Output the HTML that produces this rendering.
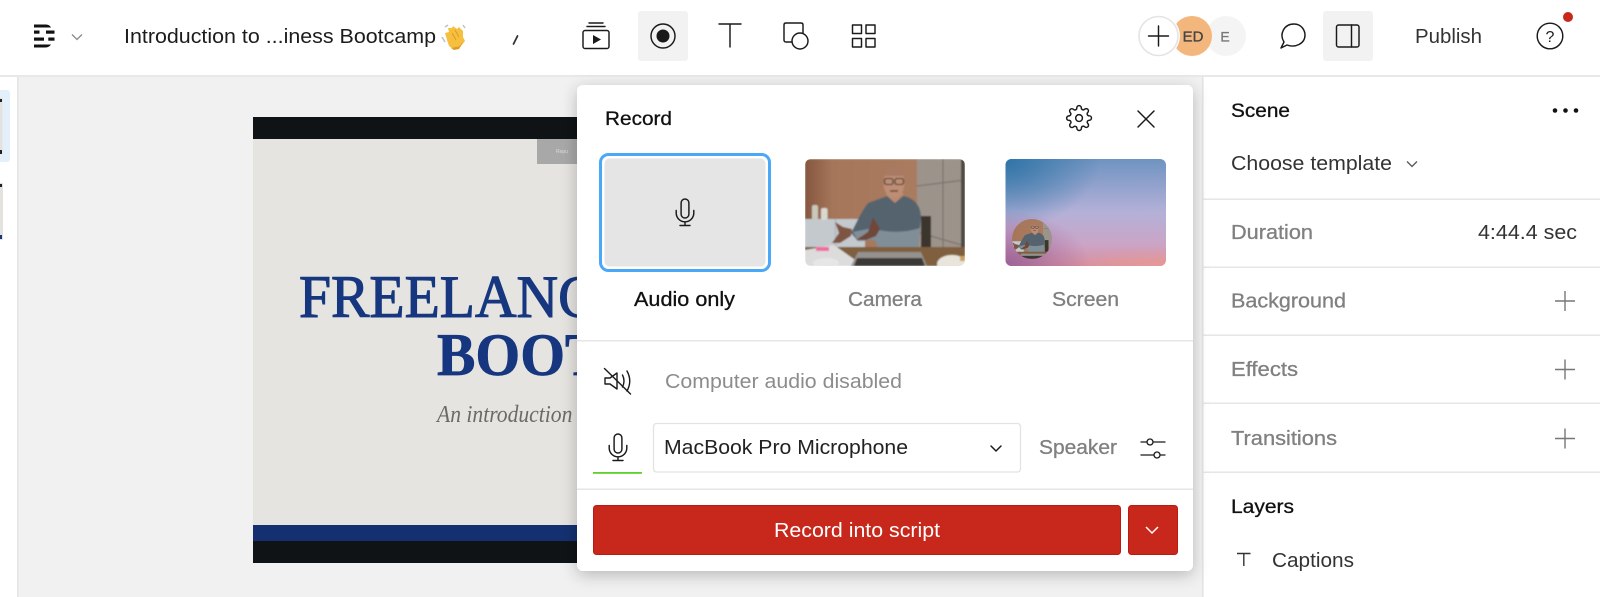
<!DOCTYPE html>
<html><head><meta charset="utf-8"><style>
html,body{margin:0;padding:0;background:#fff;width:1600px;height:597px;overflow:hidden}
svg{display:block}
text{font-family:"Liberation Sans",sans-serif;fill:#1c1c1c}
.m{stroke:currentColor;stroke-width:.3px}
.i{fill:none;stroke:#1a1a1a;stroke-width:1.450;stroke-linecap:round;stroke-linejoin:round}
.g{fill:#808080;color:#808080}
.s{font-family:"Liberation Serif",serif;fill:#16377f}
</style></head><body>
<svg width="1600" height="597" viewBox="0 0 1600 597" xmlns="http://www.w3.org/2000/svg">
<defs>
<filter id="sh" x="-10%" y="-10%" width="120%" height="125%"><feDropShadow dx="0" dy="4" stdDeviation="8" flood-color="#000" flood-opacity=".24"/></filter>
<filter id="b1"><feGaussianBlur stdDeviation=".8"/></filter>
<clipPath id="cam"><rect x="805" y="159" width="160" height="107" rx="6"/></clipPath>
<clipPath id="scr"><rect x="1005.500" y="159" width="160.500" height="107" rx="6"/></clipPath>
<clipPath id="cir"><circle cx="1032" cy="239" r="20"/></clipPath>
<linearGradient id="sv" x1="0" y1="0" x2="0" y2="1"><stop offset="0" stop-color="#6f93c1"/><stop offset=".5" stop-color="#b4b1d8"/><stop offset=".8" stop-color="#cba4c6"/><stop offset="1" stop-color="#d8909e"/></linearGradient>
<radialGradient id="tl"><stop offset="0" stop-color="#2f74a6"/><stop offset="1" stop-color="#2f74a6" stop-opacity="0"/></radialGradient>
<radialGradient id="bl"><stop offset="0" stop-color="#9c6298"/><stop offset="1" stop-color="#9c6298" stop-opacity="0"/></radialGradient>
<radialGradient id="br"><stop offset="0" stop-color="#ee9c90"/><stop offset="1" stop-color="#ee9c90" stop-opacity="0"/></radialGradient>
<linearGradient id="wall" x1="0" y1="0" x2="1" y2="0"><stop offset="0" stop-color="#85563f"/><stop offset=".25" stop-color="#a6765a"/><stop offset="1" stop-color="#a97b5e"/></linearGradient>
<g id="photo" filter="url(#b1)">
<rect x="805" y="159" width="112" height="107" fill="url(#wall)"/>
<rect x="917" y="159" width="48" height="107" fill="#9c938b"/>
<path d="M917 186 965 180M917 232 965 246M943 159V250" stroke="#756d66" stroke-width="1" fill="none"/>
<rect x="961" y="159" width="4" height="100" fill="#4e4842"/>
<rect x="805" y="219" width="60" height="30" fill="#c3c9cd"/>
<rect x="835" y="219" width="1" height="30" fill="#a9afb4"/>
<rect x="812" y="205" width="6" height="15" rx="2" fill="#c9c8bc"/>
<rect x="821" y="208" width="6.500" height="12" rx="2" fill="#d9d8cf"/>
<rect x="921" y="216" width="10" height="32" fill="#3a342f"/>
<path d="M887 196 868 203C861 212 857 222 851 233L858 241 875 240 878 248H918L921 218C921 207 916 199 904 196Z" fill="#55636e"/>
<path d="M853 232 858 241 875 240 878 248H918L920 228C905 233 885 233 873 228Z" fill="#808e98"/>
<path d="M886 195 895 203 904 195 900 188 889 188Z" fill="#b98a70"/>
<ellipse cx="894" cy="183" rx="10.500" ry="15" fill="#bd8e74"/>
<path d="M884 176C885 165 903 165 904 176Z" fill="#a97a63"/>
<rect x="884.500" y="178.500" width="8.500" height="6" rx="2" fill="none" stroke="#222" stroke-width="1.100"/>
<rect x="895" y="178.500" width="8.500" height="6" rx="2" fill="none" stroke="#222" stroke-width="1.100"/>
<path d="M890 191h8" stroke="#6e3f35" stroke-width="1.500"/>
<path d="M832 243 839 233 835 222 843 227 852 229 851 236 840 243Z" fill="#7e5542"/>
<path d="M856 240 868 232 873 217 880 229 876 236 866 240Z" fill="#6f4637"/>
<rect x="805" y="247" width="160" height="19" fill="#7f5e3e"/>
<path d="M805 250 834 245 858 262 850 266H805Z" fill="#dcdcdc"/>
<rect x="816" y="247" width="13" height="4" fill="#f06aa0"/>
<ellipse cx="826" cy="263" rx="13" ry="5" fill="#e6e6e6"/>
<path d="M858 252H921L927 266H851Z" fill="#94918f"/>
<path d="M857 258H922L925 266H854Z" fill="#3a3836"/>
<ellipse cx="952" cy="264" rx="15" ry="9" fill="#e9e5dc"/>
<rect x="960" y="256" width="5" height="5" fill="#caa160"/>
</g>
<g id="mic" class="i" style="stroke-width:1.450"><rect x="-3.900" y="-14" width="7.800" height="19" rx="3.900"/><path d="M-8.800 -2.500V0A8.800 8.800 0 0 0 8.800 0V-2.500M0 9V12.500M-5 12.500H5"/></g>
</defs>

<!-- top bar -->
<rect width="1600" height="597" fill="#fff"/>
<rect x="18" y="77" width="1185" height="520" fill="#f1f1f1"/>
<rect x="0" y="75" width="1600" height="2" fill="#e8e8e8"/>
<rect x="17" y="77" width="1.500" height="520" fill="#e4e4e4"/>

<!-- logo -->
<g fill="#111"><path d="M34 24.500H46Q49.500 24.500 51 27.500H34Z"/><rect x="34" y="30.500" width="5.500" height="3.200"/><rect x="46" y="30.500" width="8.500" height="3.200"/><rect x="34" y="37.500" width="10" height="3.200"/><rect x="48.300" y="37.500" width="6.200" height="3.200"/><path d="M34 44.500H51Q49 47.500 45 47.500H34Z"/></g>
<path d="M72 34.500 77 39.500 82 34.500" fill="none" stroke="#8a8a8a" stroke-width="1.300"/>
<text x="124" y="43" font-size="20" textLength="312" lengthAdjust="spacingAndGlyphs">Introduction to ...iness Bootcamp</text>
<!-- wave hand -->
<g>
<path d="M447 40 445 33 449 32 448 28 452 28 453 26 457 29 459 27 463 31 463 37 465 41 459 48 453 49 449 46Z" fill="#f6bf3e"/>
<path d="M451 48 459 46.500 464 41 459 49 454 50Z" fill="#e09a1f"/>
<path d="M442 37 445 42M445 27 448 25M463 25 465 28" stroke="#b9c2cc" stroke-width="1.500" fill="none"/>
<path d="M452 33 456 40M455 30 459 37" stroke="#d99a25" stroke-width=".9" fill="none"/>
</g>
<path d="M517.500 36 513.500 44" stroke="#333" stroke-width="1.800" stroke-linecap="round"/>

<!-- tools -->
<g class="i">
<path d="M589 23H603M587 26.500H605"/>
<rect x="583" y="30.500" width="26" height="18" rx="2"/>
</g>
<path d="M593 35V44L601 39.500Z" fill="#1a1a1a"/>
<rect x="638" y="11" width="50" height="50" rx="3" fill="#f2f2f2"/>
<circle cx="663" cy="36" r="12" class="i"/>
<circle cx="663" cy="36" r="6.500" fill="#1a1a1a"/>
<path class="i" d="M719 24H741M730 24V47"/>
<path class="i" d="M792 42H786Q784 42 784 40V25Q784 23 786 23H801Q803 23 803 25V33"/>
<circle class="i" cx="800" cy="41" r="8"/>
<g class="i"><rect x="852.500" y="25" width="9" height="8.500"/><rect x="866" y="25" width="9" height="8.500"/><rect x="852.500" y="38.500" width="9" height="8.500"/><rect x="866" y="38.500" width="9" height="8.500"/></g>

<!-- avatars -->
<circle cx="1226" cy="36" r="20" fill="#f4f4f4"/>
<text x="1225" y="41.500" font-size="14" text-anchor="middle" class="m" style="fill:#777;color:#777">E</text>
<circle cx="1192" cy="36" r="20" fill="#f3b77d"/>
<text x="1193" y="41.500" font-size="15" text-anchor="middle" class="m" style="fill:#444;color:#444">ED</text>
<circle cx="1158.500" cy="36" r="21.500" fill="#fff"/>
<circle cx="1158.500" cy="36" r="19.500" fill="#fff" stroke="#e4e4e4" stroke-width="1.600"/>
<path class="i" d="M1148.500 36H1168.500M1158.500 26V46"/>
<path class="i" d="M1281 48 1284 42C1279 34 1284 24 1294 24C1302 24 1305 31 1305 35C1305 44 1295 48 1287 45Z"/>
<rect x="1323" y="11" width="50" height="50" rx="3" fill="#f2f2f2"/>
<rect class="i" x="1336.500" y="25" width="22.500" height="22" rx="2"/>
<path class="i" d="M1351.500 25V47"/>
<text x="1415" y="43" font-size="20" textLength="67" lengthAdjust="spacingAndGlyphs" style="fill:#333">Publish</text>
<circle class="i" cx="1550" cy="36" r="12.800"/>
<text x="1550" y="42" font-size="16" text-anchor="middle">?</text>
<circle cx="1568" cy="17" r="5" fill="#c8281b"/>

<!-- left strip -->
<rect x="-6" y="90" width="16" height="72" rx="3" fill="#e3f0fb"/>
<rect x="0" y="98" width="2.500" height="56" fill="#e3e2df"/>
<rect x="0" y="99" width="2" height="3" fill="#222"/>
<rect x="0" y="150" width="2" height="4" fill="#222"/>
<rect x="0" y="183" width="3" height="57" fill="#e3e2df"/>
<rect x="0" y="184" width="2" height="3" fill="#222"/>
<rect x="0" y="235" width="2" height="4" fill="#16377f"/>

<!-- video -->
<rect x="253" y="117" width="340" height="446" fill="#e5e4e0"/>
<rect x="253" y="117" width="340" height="22" fill="#0f1316"/>
<rect x="537" y="139" width="50" height="25" fill="#a8a8a8"/>
<text x="556" y="153" font-size="5" style="fill:#ddd">Repu</text>
<rect x="253" y="525" width="340" height="16" fill="#143070"/>
<rect x="253" y="541" width="340" height="22" fill="#0f1316"/>
<text class="s" transform="translate(299 317) scale(.96 1)" font-size="60" style="stroke:#16377f;stroke-width:1.100px">FREELANCE</text>
<text class="s" transform="translate(437 375) scale(.96 1)" font-size="60" font-weight="700" style="stroke:#16377f;stroke-width:.7px">BOOT</text>
<text class="s" transform="translate(437 422) scale(.9 1)" font-size="24" font-style="italic" style="fill:#6b6a66">An introduction</text>

<!-- right panel -->
<rect x="1203" y="77" width="397" height="520" fill="#fff"/>
<rect x="1202" y="77" width="1.500" height="520" fill="#e2e2e2"/>
<g fill="#e6e6e6"><rect x="1203" y="198.500" width="397" height="1.500"/><rect x="1203" y="266.500" width="397" height="1.500"/><rect x="1203" y="334.500" width="397" height="1.500"/><rect x="1203" y="402.500" width="397" height="1.500"/><rect x="1203" y="471.500" width="397" height="1.500"/></g>
<text x="1231" y="117" font-size="19.500" textLength="59" lengthAdjust="spacingAndGlyphs" class="m" style="color:#111;fill:#111">Scene</text>
<g fill="#111"><circle cx="1555" cy="110.500" r="2.300"/><circle cx="1565.500" cy="110.500" r="2.300"/><circle cx="1576" cy="110.500" r="2.300"/></g>
<text x="1231" y="170" font-size="20" textLength="161" lengthAdjust="spacingAndGlyphs" style="fill:#333">Choose template</text>
<path d="M1407 161.500 1412 166.500 1417 161.500" fill="none" stroke="#555" stroke-width="1.300"/>
<text x="1231" y="239" font-size="20" textLength="82" lengthAdjust="spacingAndGlyphs" class="g m">Duration</text>
<text x="1478" y="239" font-size="20" textLength="99" lengthAdjust="spacingAndGlyphs" style="fill:#333">4:44.4 sec</text>
<text x="1231" y="307.500" font-size="20" textLength="115" lengthAdjust="spacingAndGlyphs" class="g m">Background</text>
<text x="1231" y="376" font-size="20" textLength="67" lengthAdjust="spacingAndGlyphs" class="g m">Effects</text>
<text x="1231" y="445" font-size="20" textLength="106" lengthAdjust="spacingAndGlyphs" class="g m">Transitions</text>
<g fill="none" stroke="#777" stroke-width="1.400"><path d="M1555 301H1575M1565 291V311"/><path d="M1555 369.500H1575M1565 359.500V379.500"/><path d="M1555 438.500H1575M1565 428.500V448.500"/></g>
<text x="1231" y="513" font-size="19.500" textLength="63" lengthAdjust="spacingAndGlyphs" class="m" style="color:#111;fill:#111">Layers</text>
<path d="M1237 553.500H1250.500M1243.800 553.500V566" fill="none" stroke="#333" stroke-width="1.400"/>
<text x="1272" y="567" font-size="20" textLength="82" lengthAdjust="spacingAndGlyphs" style="fill:#333">Captions</text>

<!-- popup -->
<rect x="577" y="85" width="616" height="486" rx="6" fill="#fff" filter="url(#sh)"/>
<text x="605" y="125" font-size="19.500" textLength="67" lengthAdjust="spacingAndGlyphs" class="m" style="color:#111;fill:#111">Record</text>
<g transform="translate(1065.500 104.500) scale(1.130)" class="i" style="stroke-width:1.300">
<circle cx="12" cy="12" r="3"/>
<path d="M19.400 15a1.650 1.650 0 0 0 .33 1.820l.06.06a2 2 0 0 1 0 2.830 2 2 0 0 1-2.830 0l-.06-.06a1.650 1.650 0 0 0-1.820-.33 1.650 1.650 0 0 0-1 1.510V21a2 2 0 0 1-2 2 2 2 0 0 1-2-2v-.09A1.650 1.650 0 0 0 9 19.400a1.650 1.650 0 0 0-1.820.33l-.06.06a2 2 0 0 1-2.830 0 2 2 0 0 1 0-2.830l.06-.06a1.650 1.650 0 0 0 .33-1.820 1.650 1.650 0 0 0-1.510-1H3a2 2 0 0 1-2-2 2 2 0 0 1 2-2h.09A1.650 1.650 0 0 0 4.600 9a1.650 1.650 0 0 0-.33-1.820l-.06-.06a2 2 0 0 1 0-2.830 2 2 0 0 1 2.830 0l.06.06a1.650 1.650 0 0 0 1.820.33H9a1.650 1.650 0 0 0 1-1.510V3a2 2 0 0 1 2-2 2 2 0 0 1 2 2v.09a1.650 1.650 0 0 0 1 1.510 1.650 1.650 0 0 0 1.820-.33l.06-.06a2 2 0 0 1 2.830 0 2 2 0 0 1 0 2.830l-.06.06a1.650 1.650 0 0 0-.33 1.820V9a1.650 1.650 0 0 0 1.510 1H21a2 2 0 0 1 2 2 2 2 0 0 1-2 2h-.09a1.650 1.650 0 0 0-1.510 1z"/>
</g>
<path class="i" d="M1138 111 1154 127M1154 111 1138 127"/>

<rect x="600.500" y="154.500" width="169" height="116" rx="8" fill="#fff" stroke="#4aa8f8" stroke-width="3"/>
<rect x="604.500" y="158.500" width="161" height="108" rx="5" fill="#e5e5e5"/>
<use href="#mic" transform="translate(685 213)"/>
<g clip-path="url(#cam)"><use href="#photo"/></g>
<g clip-path="url(#scr)">
<rect x="1005" y="159" width="162" height="107" fill="url(#sv)"/>
<ellipse cx="1005" cy="159" rx="95" ry="70" fill="url(#tl)"/>
<ellipse cx="1005" cy="266" rx="85" ry="55" fill="url(#bl)"/>
<ellipse cx="1166" cy="276" rx="100" ry="30" fill="url(#br)"/>
<g clip-path="url(#cir)"><use href="#photo" transform="translate(1032 239) scale(.375) translate(-887 -213)"/></g>
</g>
<text x="634" y="306" font-size="20" textLength="101" lengthAdjust="spacingAndGlyphs" class="m" style="color:#111;fill:#111">Audio only</text>
<text x="848" y="306" font-size="20" textLength="74" lengthAdjust="spacingAndGlyphs" class="g m">Camera</text>
<text x="1052" y="306" font-size="20" textLength="67" lengthAdjust="spacingAndGlyphs" class="g m">Screen</text>

<rect x="577" y="340" width="616" height="1.500" fill="#e6e6e6"/>
<g class="i" style="stroke-width:1.400">
<path d="M605 378H610L617 373V389L610 384H605Z"/>
<path d="M622.500 375Q625.500 381 622.500 387M627 371Q632.500 381 627 391"/>
<path d="M604.500 368.500 630.500 394"/>
</g>
<text x="665" y="388" font-size="20" textLength="237" lengthAdjust="spacingAndGlyphs" style="fill:#8c8c8c">Computer audio disabled</text>

<use href="#mic" transform="translate(618 448)"/>
<rect x="593" y="472" width="49" height="1.800" fill="#5fd12a"/>
<rect x="653.500" y="423.500" width="367" height="48.500" rx="3" fill="#fff" stroke="#e3e3e3" stroke-width="1.300"/>
<text x="664" y="454" font-size="20" textLength="244" lengthAdjust="spacingAndGlyphs" style="fill:#222">MacBook Pro Microphone</text>
<path class="i" d="M991 446 996 451 1001 446"/>
<text x="1039" y="454" font-size="20" textLength="78" lengthAdjust="spacingAndGlyphs" class="g m">Speaker</text>
<g class="i" style="stroke-width:1.300">
<path d="M1141 442H1147M1153.500 442H1165M1141 455H1154M1160.500 455H1165"/>
<circle cx="1150" cy="442" r="3"/><circle cx="1157" cy="455" r="3"/>
</g>

<rect x="577" y="488.500" width="616" height="1.500" fill="#e6e6e6"/>
<rect x="593.500" y="505.500" width="527" height="49" rx="3" fill="#c8281b" stroke="#bb1a10" stroke-width="1"/>
<text x="774" y="537" font-size="20" textLength="166" lengthAdjust="spacingAndGlyphs" style="fill:#fff">Record into script</text>
<rect x="1128.500" y="505.500" width="49" height="49" rx="3" fill="#c8281b" stroke="#bb1a10" stroke-width="1"/>
<path d="M1146 527 1152 533 1158 527" fill="none" stroke="#fff" stroke-width="1.500"/>
</svg>
</body></html>
